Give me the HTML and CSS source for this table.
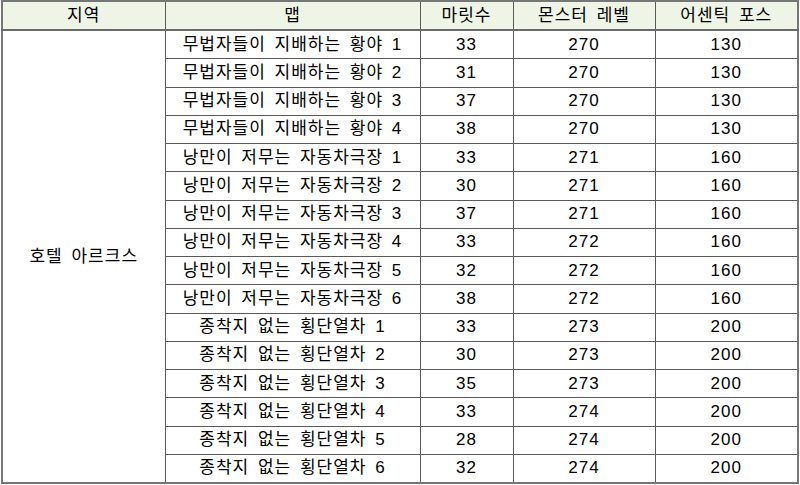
FILE: index.html
```html
<!DOCTYPE html>
<html lang="ko">
<head>
<meta charset="utf-8">
<link rel="stylesheet" href="styles.css">
</head>
<body>
<table class="maps">
  <colgroup>
    <col class="c-region">
    <col class="c-map">
    <col class="c-mark">
    <col class="c-level">
    <col class="c-force">
  </colgroup>
  <thead>
    <tr><th>지역</th><th>맵</th><th>마릿수</th><th>몬스터 레벨</th><th>어센틱 포스</th></tr>
  </thead>
  <tbody>
    <tr><td class="region" rowspan="16">호텔 아르크스</td><td>무법자들이 지배하는 황야 1</td><td>33</td><td>270</td><td>130</td></tr>
    <tr><td>무법자들이 지배하는 황야 2</td><td>31</td><td>270</td><td>130</td></tr>
    <tr><td>무법자들이 지배하는 황야 3</td><td>37</td><td>270</td><td>130</td></tr>
    <tr><td>무법자들이 지배하는 황야 4</td><td>38</td><td>270</td><td>130</td></tr>
    <tr><td>낭만이 저무는 자동차극장 1</td><td>33</td><td>271</td><td>160</td></tr>
    <tr><td>낭만이 저무는 자동차극장 2</td><td>30</td><td>271</td><td>160</td></tr>
    <tr><td>낭만이 저무는 자동차극장 3</td><td>37</td><td>271</td><td>160</td></tr>
    <tr><td>낭만이 저무는 자동차극장 4</td><td>33</td><td>272</td><td>160</td></tr>
    <tr><td>낭만이 저무는 자동차극장 5</td><td>32</td><td>272</td><td>160</td></tr>
    <tr><td>낭만이 저무는 자동차극장 6</td><td>38</td><td>272</td><td>160</td></tr>
    <tr><td>종착지 없는 횡단열차 1</td><td>33</td><td>273</td><td>200</td></tr>
    <tr><td>종착지 없는 횡단열차 2</td><td>30</td><td>273</td><td>200</td></tr>
    <tr><td>종착지 없는 횡단열차 3</td><td>35</td><td>273</td><td>200</td></tr>
    <tr><td>종착지 없는 횡단열차 4</td><td>33</td><td>274</td><td>200</td></tr>
    <tr><td>종착지 없는 횡단열차 5</td><td>28</td><td>274</td><td>200</td></tr>
    <tr><td>종착지 없는 횡단열차 6</td><td>32</td><td>274</td><td>200</td></tr>
  </tbody>
</table>
</body>
</html>
```

FILE: styles.css
```css
html, body {
  margin: 0;
  padding: 0;
  background: #ffffff;
}

body {
  padding: 0 0 0 1px;
}

.maps {
  border-collapse: collapse;
  table-layout: fixed;
  width: 796px;
  border: 2px solid #767676;
  font-family: "Liberation Sans", "Noto Sans CJK KR", sans-serif;
  font-size: 17px;
  color: #000000;
}

.c-region { width: 163px; }
.c-map { width: 255px; }
.c-mark { width: 93px; }
.c-level { width: 142px; }
.c-force { width: 143px; }

.maps th,
.maps td {
  padding: 0;
  text-align: center;
  border: 1px solid #5a5a5a;
  white-space: nowrap;
  line-height: 20px;
  letter-spacing: 1px;
  word-spacing: 3px;
}

.maps th {
  height: 27px;
  font-weight: normal;
  background: #eef4e6;
  border-bottom: 2px solid #6a6a6a;
}

.maps td {
  height: 27.25px;
}
```
